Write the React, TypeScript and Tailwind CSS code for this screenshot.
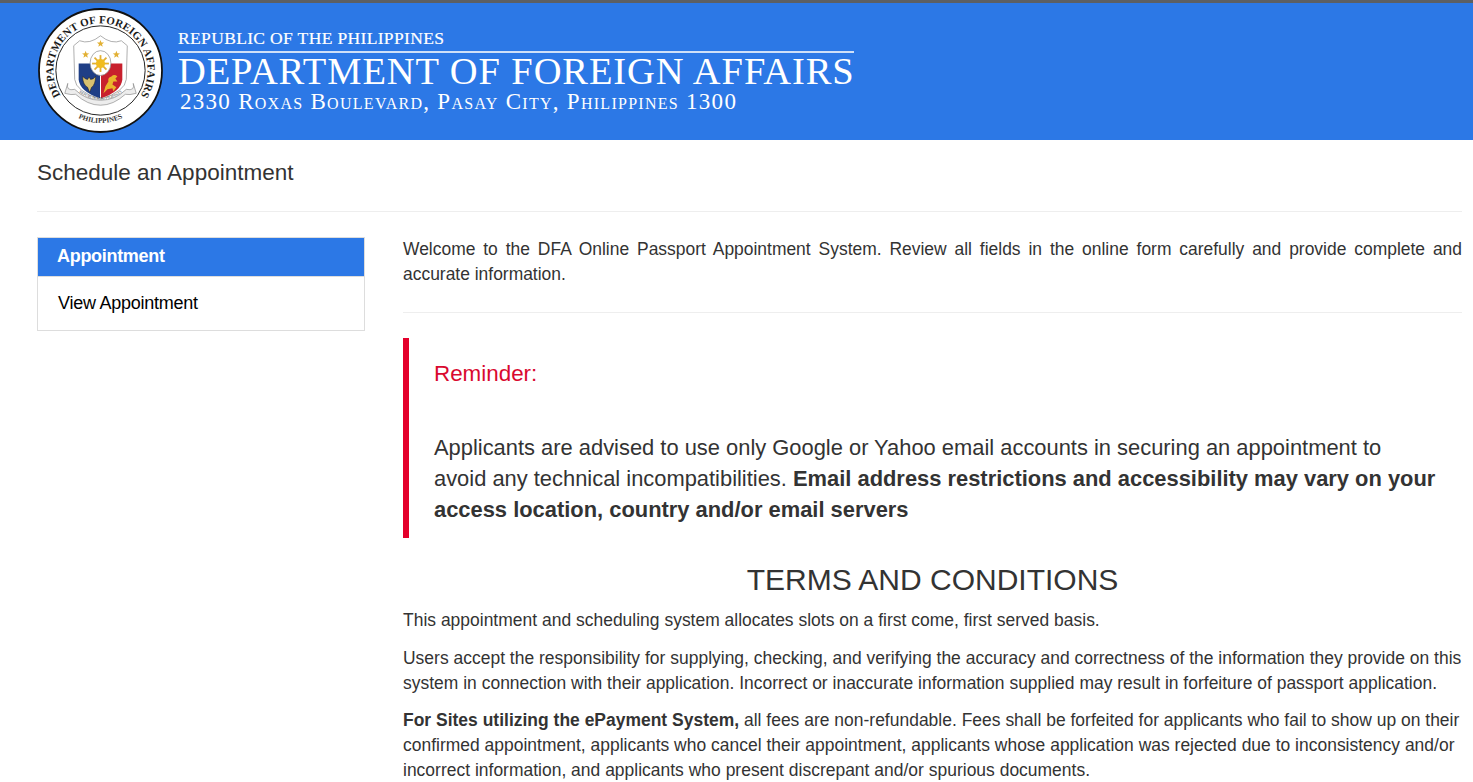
const arial = "font-['Liberation_Sans',Arial,sans-serif]";

function Star({ x, y, r }: { x: number; y: number; r: number }) {
  const pts: string[] = [];
  for (let i = 0; i < 10; i++) {
    const a = (-90 + i * 36) * (Math.PI / 180);
    const q = i % 2 === 0 ? r : r * 0.42;
    pts.push(`${(x + q * Math.cos(a)).toFixed(2)},${(y + q * Math.sin(a)).toFixed(2)}`);
  }
  return <polygon points={pts.join(" ")} fill="#e2b033" />;
}

function Seal() {
  const rays = Array.from({ length: 8 }, (_, i) => i * 45);
  return (
    <svg width="125" height="125" viewBox="0 0 126 126" className="shrink-0">
      <defs>
        <path id="sealTop" d="M 22.7 88.2 A 47.5 47.5 0 1 1 103.3 88.2" />
        <path id="sealBottom" d="M 37 109 A 53 53 0 0 0 89 109" />
        <path id="sealMotto" d="M 40 84 A 36 36 0 0 0 86 84" />
      </defs>
      <circle cx="63" cy="63" r="62" fill="#fff" stroke="#111" strokeWidth="1.8" />
      <circle cx="63" cy="63" r="45" fill="#fff" stroke="#222" strokeWidth="1" />
      <text fontFamily="'Liberation Serif',serif" fontSize="11" fontWeight="700" fill="#1a1a1a">
        <textPath href="#sealTop" textLength="202" lengthAdjust="spacing">DEPARTMENT OF FOREIGN AFFAIRS</textPath>
      </text>
      <text fontFamily="'Liberation Serif',serif" fontSize="7.2" fontWeight="700" fill="#333">
        <textPath href="#sealBottom" startOffset="50%" textAnchor="middle">PHILIPPINES</textPath>
      </text>
      {/* scroll */}
      <path d="M30 76 Q28 84 37 82 Q48 93 63 93 Q78 93 89 82 Q98 84 96 76 L99 86 Q92 88 88 87 Q76 98 63 98 Q50 98 38 87 Q34 88 27 86 Z" fill="#ededed" stroke="#8c8c8c" strokeWidth="0.7" />
      {/* shield outline */}
      <path d="M36 38 L42 33 Q52 37 63 28 Q74 37 84 33 L90 38 L89 72 Q88 84 63 92 Q38 84 37 72 Z" fill="#fff" stroke="#9a9a9a" strokeWidth="0.8" />
      {/* blue and red */}
      <path d="M41 56 L62.5 56 L62.5 91 Q42 84 41 72 Z" fill="#1f3f86" />
      <path d="M63.5 56 L85 56 L85 72 Q84 84 63.5 91 Z" fill="#c8202d" />
      {/* white oval */}
      <ellipse cx="63" cy="55.5" rx="10.5" ry="12.5" fill="#fff" stroke="#8a8a8a" strokeWidth="0.7" />
      {rays.map((a) => (
        <rect key={a} x="62.1" y="47.5" width="1.8" height="6" fill="#e2b033" transform={`rotate(${a} 63 56)`} />
      ))}
      <circle cx="63" cy="56" r="4.6" fill="#f1bc1e" />
      <Star x={63} y={36} r={3.8} />
      <Star x={48} y={47} r={3.8} />
      <Star x={79} y={47} r={3.8} />
      {/* eagle */}
      <path d="M45 69 Q48 72 50 72 L51.5 69.5 L53 72 Q56 72 58 69 Q58 77 54 80 L52 85 L50 80 Q45 77 45 69 Z" fill="#d8c170" stroke="#1a1a1a" strokeWidth="0.5" />
      {/* lion */}
      <path d="M68 79 L71 74 Q70 70 74 69 Q77 66 80 69 L78 71 L80 74 L76 74 L75 77 L79 80 L76 84 L75 81 L70 82 L66 86 Z" fill="#e9b52c" />
      <text fontFamily="'Liberation Serif',serif" fontSize="3.8" fill="#444">
        <textPath href="#sealMotto" startOffset="50%" textAnchor="middle">REPUBLIKA NG PILIPINAS</textPath>
      </text>
    </svg>
  );
}

function HeaderText() {
  return (
    <div className="ml-[15px] mt-[17px] w-[676px] font-['Liberation_Serif',serif] text-white">
      <div className="h-[26px] pl-[0px] text-[17.5px] leading-[26px] tracking-[0.35px] whitespace-nowrap [-webkit-text-stroke:0.2px_white]">REPUBLIC OF THE PHILIPPINES</div>
      <div className="h-[2px] bg-[#cfe0f8]" />
      <div className="h-[34px] text-[38.5px] leading-[36px] tracking-[0.9px] whitespace-nowrap">DEPARTMENT OF FOREIGN AFFAIRS</div>
      <div className="mt-[3px] pl-[2px] text-[23px] leading-[24px] tracking-[1.28px] whitespace-nowrap [font-variant:small-caps]">2330 Roxas Boulevard, Pasay City, Philippines 1300</div>
    </div>
  );
}

export default function App() {
  return (
    <div className={`${arial} min-h-[782px] h-[782px] overflow-hidden bg-white text-[#333333]`}>
      <div className="h-[3px] bg-[#5c5f63]" />
      <header className="flex h-[137px] bg-[#2c78e6] pl-[38px] pt-[5px]">
        <Seal />
        <HeaderText />
      </header>
      <div className="pl-[37px] pr-[11px]">
        <h1 className="h-[72px] border-b border-[#eeeeee] pt-[20px] text-[22.5px] leading-[26px] font-normal">Schedule an Appointment</h1>
        <div className="mt-[25px] flex gap-[38px]">
          <aside className="w-[328px] shrink-0">
            <div className="border border-[#dddddd] text-[#000]">
              <div className="h-[38px] bg-[#2c78e6] pl-[19px] text-[18px] leading-[36px] font-bold tracking-[-0.3px] text-white">Appointment</div>
              <div className="h-[54px] border-t border-[#dddddd] pl-[20px] pt-[13px] text-[18px] leading-[26px] tracking-[-0.25px]">View Appointment</div>
            </div>
          </aside>
          <main className="min-w-0 flex-1">
            <p className="text-justify text-[17.45px] leading-[25px]">
              Welcome to the DFA Online Passport Appointment System. Review all fields in the online form carefully and provide complete and accurate information.
            </p>
            <hr className="mt-[25px] border-[#eeeeee]" />
            <div className="mt-[25px] h-[200px] border-l-[6px] border-[#e4002b] pl-[25px] pr-[25px] pt-[21px]">
              <h4 className="text-[22.4px] leading-[30px] font-normal text-[#d9092f]">Reminder:</h4>
              <p className="mt-[43px] text-[21.9px] leading-[31px]">
                Applicants are advised to use only Google or Yahoo email accounts in securing an appointment to avoid any technical incompatibilities.{" "}
                <b>Email address restrictions and accessibility may vary on your access location, country and/or email servers</b>
              </p>
            </div>
            <h2 className="mt-[24px] text-center text-[30px] leading-[36px] font-normal">TERMS AND CONDITIONS</h2>
            <p className="mt-[10px] text-[17.45px] leading-[25px] tracking-[0.02px]">This appointment and scheduling system allocates slots on a first come, first served basis.</p>
            <p className="mt-[13px] text-[17.45px] leading-[25px] tracking-[0.02px]">Users accept the responsibility for supplying, checking, and verifying the accuracy and correctness of the information they provide on this system in connection with their application. Incorrect or inaccurate information supplied may result in forfeiture of passport application.</p>
            <p className="mt-[12px] text-[17.45px] leading-[25px] tracking-[0.02px]"><b>For Sites utilizing the ePayment System,</b> all fees are non-refundable. Fees shall be forfeited for applicants who fail to show up on their confirmed appointment, applicants who cancel their appointment, applicants whose application was rejected due to inconsistency and/or incorrect information, and applicants who present discrepant and/or spurious documents.</p>
          </main>
        </div>
      </div>
    </div>
  );
}
